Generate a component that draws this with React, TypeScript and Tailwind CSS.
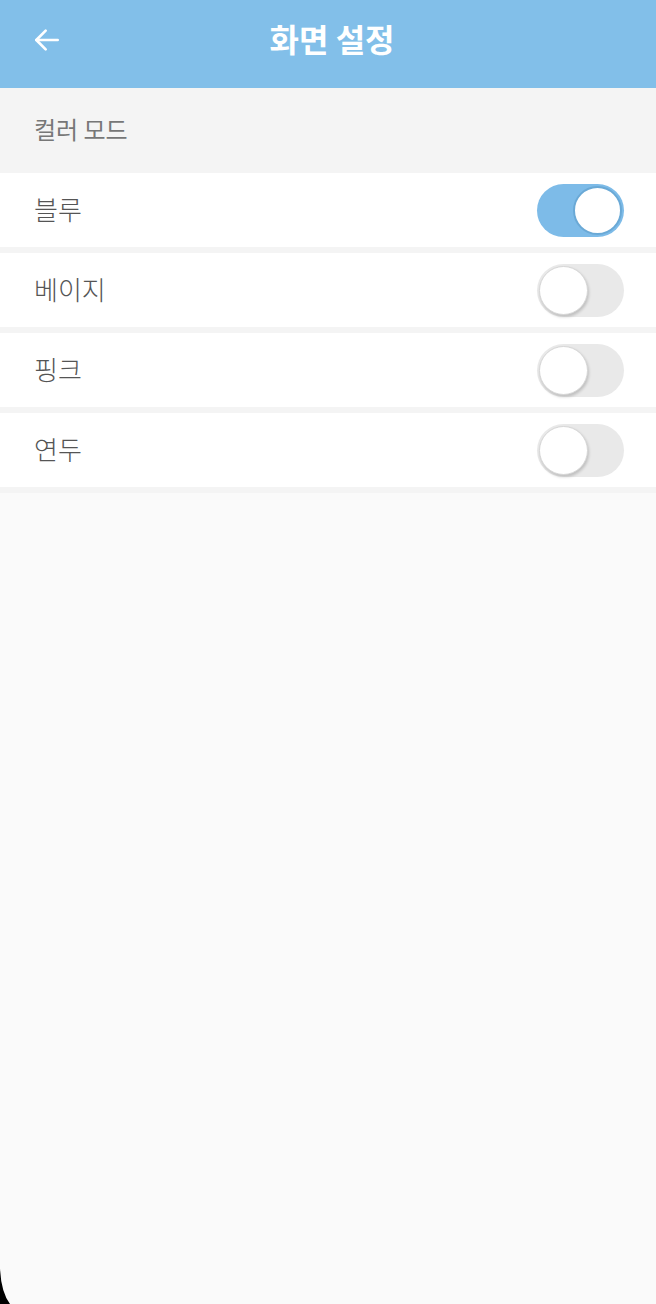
import { useState } from 'react'

const colors = ['블루', '베이지', '핑크', '연두']

function Toggle({ on, onClick }: { on: boolean; onClick: () => void }) {
  return (
    <button
      onClick={onClick}
      className={`relative w-[87px] h-[53px] rounded-full flex items-center px-[2px] ${
        on ? 'bg-[#7dbbe8] justify-end' : 'bg-[#e9e9e9] justify-start'
      }`}
    >
      <span
        className={`w-[49px] h-[49px] rounded-full bg-white ${
          on ? 'border-[2px] border-[#6aa9d6]' : 'border border-[#d6d6d6] shadow-[1px_2px_3px_rgba(0,0,0,0.18)]'
        }`}
      />
    </button>
  )
}

export default function App() {
  const [selected, setSelected] = useState(0)

  return (
    <div className="relative h-[1304px] bg-[#fafafa] overflow-hidden font-['Noto_Sans_CJK_KR','Noto_Sans',sans-serif]">
      <header className="h-[88px] bg-[#82bfe9] flex items-center relative">
        <button className="absolute left-[29px] top-[22px] w-[36px] h-[36px] flex items-center justify-center">
          <svg width="32" height="32" viewBox="0 0 24 24" fill="none" stroke="white" strokeWidth="2" strokeLinecap="round" strokeLinejoin="round">
            <path d="M20 12H4" />
            <path d="M11 5l-7 7 7 7" />
          </svg>
        </button>
        <h1 className="w-full text-center text-white text-[32px] font-bold leading-none pb-[12px] pl-[8px]">화면 설정</h1>
      </header>

      <div className="h-[85px] bg-[#f4f4f4] flex items-center px-[34px]">
        <span className="text-[24px] text-[#777] leading-none pb-[3px]">컬러 모드</span>
      </div>

      <div className="flex flex-col gap-[6px] bg-[#f4f4f4] pb-[6px]">
        {colors.map((c, i) => (
          <div key={c} className="h-[74px] bg-white flex items-center justify-between pl-[34px] pr-[32px]">
            <span className="text-[26px] font-light text-[#555] leading-none pb-[3px]">{c}</span>
            <Toggle on={selected === i} onClick={() => setSelected(i)} />
          </div>
        ))}
      </div>

      <div className="absolute left-0 bottom-0 w-[20px] h-[36px] bg-black [clip-path:path('M0_0_Q1_24_10_36_L0_36_Z')]" />
    </div>
  )
}
